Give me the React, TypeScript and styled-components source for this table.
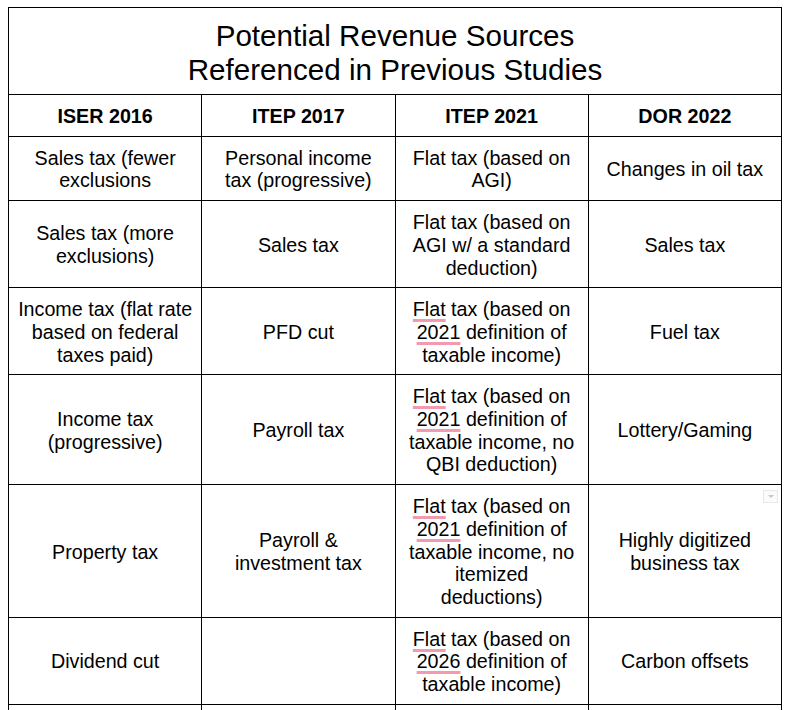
import styled, { createGlobalStyle } from "styled-components";
import { ReactNode } from "react";

const GlobalStyle = createGlobalStyle`
  html, body {
    margin: 0;
    padding: 0;
    background: #ffffff;
  }
  body {
    font-family: "Liberation Sans", Arial, sans-serif;
    color: #000000;
  }
`;

const Page = styled.div`
  padding: 7px 8px 0 8px;
  position: relative;
`;

const Table = styled.table`
  width: 774px;
  border-collapse: collapse;
  table-layout: fixed;
`;

const TitleCell = styled.th`
  border: 1px solid #000;
  padding: 11px 7px 7px;
  font-size: 29.6px;
  line-height: 34px;
  font-weight: 400;
  text-align: center;
`;

const HeadCell = styled.th`
  border: 1px solid #000;
  padding: 10px 4px 8px;
  font-size: 19.7px;
  line-height: 22.7px;
  font-weight: 700;
  text-align: center;
  vertical-align: middle;
`;

const Cell = styled.td<{ $rowHeight?: number }>`
  border: 1px solid #000;
  padding: 10px 4px 8px;
  font-size: 19.7px;
  line-height: 22.7px;
  text-align: center;
  vertical-align: middle;
  white-space: nowrap;
  height: ${(p) => (p.$rowHeight ? `${p.$rowHeight}px` : "auto")};
`;

// spell-check style squiggle under a word
const Flag = styled.span`
  text-decoration: underline;
  text-decoration-color: #f29bb0;
  text-decoration-thickness: 3px;
  text-underline-offset: 3px;
`;

const MenuHint = styled.div`
  position: absolute;
  left: 763px;
  top: 490px;
  width: 13px;
  height: 11px;
  border: 1px solid #e8e8e8;
  background: #fbfbfb;
  display: flex;
  align-items: center;
  justify-content: center;

  &::after {
    content: "";
    border-left: 3px solid transparent;
    border-right: 3px solid transparent;
    border-top: 3px solid #c8c8c8;
  }
`;

const lines = (...parts: ReactNode[]) =>
  parts.map((p, i) => (
    <span key={i}>
      {i > 0 && <br />}
      {p}
    </span>
  ));

const headers = ["ISER 2016", "ITEP 2017", "ITEP 2021", "DOR 2022"];

const rows: ReactNode[][] = [
  [
    lines("Sales tax (fewer", "exclusions"),
    lines("Personal income", "tax (progressive)"),
    lines("Flat tax (based on", "AGI)"),
    lines("Changes in oil tax"),
  ],
  [
    lines("Sales tax (more", "exclusions)"),
    lines("Sales tax"),
    lines("Flat tax (based on", "AGI w/ a standard", "deduction)"),
    lines("Sales tax"),
  ],
  [
    lines("Income tax (flat rate", "based on federal", "taxes paid)"),
    lines("PFD cut"),
    lines(
      <>
        <Flag>Flat</Flag> tax (based on
      </>,
      <>
        <Flag>2021</Flag> definition of
      </>,
      "taxable income)"
    ),
    lines("Fuel tax"),
  ],
  [
    lines("Income tax", "(progressive)"),
    lines("Payroll tax"),
    lines(
      <>
        <Flag>Flat</Flag> tax (based on
      </>,
      <>
        <Flag>2021</Flag> definition of
      </>,
      "taxable income, no",
      "QBI deduction)"
    ),
    lines("Lottery/Gaming"),
  ],
  [
    lines("Property tax"),
    lines("Payroll &", "investment tax"),
    lines(
      <>
        <Flag>Flat</Flag> tax (based on
      </>,
      <>
        <Flag>2021</Flag> definition of
      </>,
      "taxable income, no",
      "itemized",
      "deductions)"
    ),
    lines("Highly digitized", "business tax"),
  ],
  [
    lines("Dividend cut"),
    "",
    lines(
      <>
        <Flag>Flat</Flag> tax (based on
      </>,
      <>
        <Flag>2026</Flag> definition of
      </>,
      "taxable income)"
    ),
    lines("Carbon offsets"),
  ],
  ["", "", "", ""],
];

export default function App() {
  return (
    <>
      <GlobalStyle />
      <Page>
        <Table>
          <thead>
            <tr>
              <TitleCell colSpan={4}>
                Potential Revenue Sources
                <br />
                Referenced in Previous Studies
              </TitleCell>
            </tr>
            <tr>
              {headers.map((h) => (
                <HeadCell key={h}>{h}</HeadCell>
              ))}
            </tr>
          </thead>
          <tbody>
            {rows.map((row, r) => (
              <tr key={r}>
                {row.map((cell, c) => (
                  <Cell key={c} $rowHeight={r === rows.length - 1 ? 60 : undefined}>
                    {cell}
                  </Cell>
                ))}
              </tr>
            ))}
          </tbody>
        </Table>
        <MenuHint />
      </Page>
    </>
  );
}
